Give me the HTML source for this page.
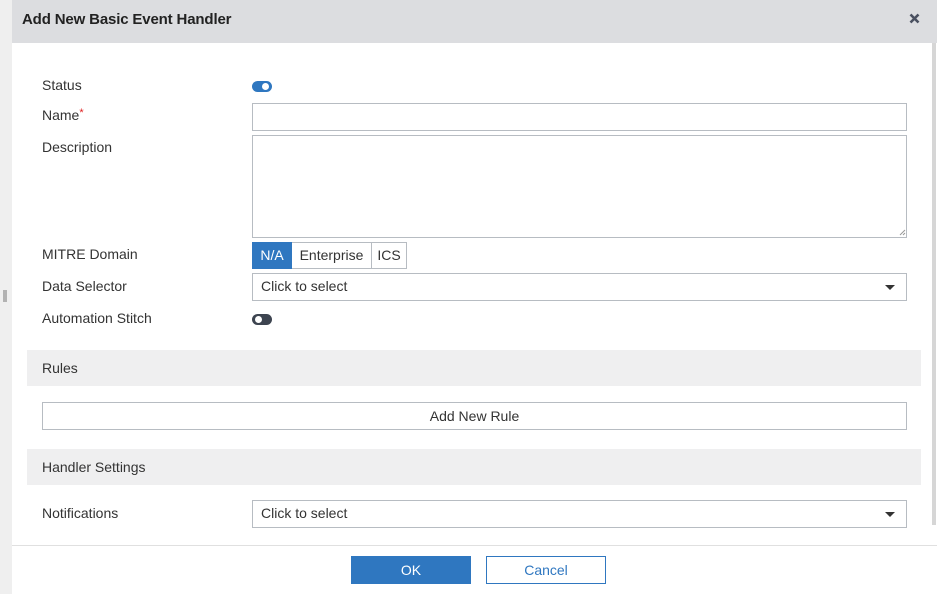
<!DOCTYPE html>
<html><head><meta charset="utf-8"><style>
*{box-sizing:border-box;margin:0;padding:0}
body{width:937px;height:594px;overflow:hidden;background:#fff;font-family:"Liberation Sans",sans-serif;font-size:14px;color:#333;position:relative}
.abs{position:absolute}
.lbl{position:absolute;left:42px;font-size:14px;color:#333}
.inp{position:absolute;left:252px;width:655px;border:1px solid #b7bcc2;background:#fff}
.sel{font-size:14px;color:#333;padding-left:8px;line-height:25px}
.arrow{position:absolute;right:11px;top:11px;width:0;height:0;border-left:5px solid transparent;border-right:5px solid transparent;border-top:5px solid #333}
.sec{position:absolute;left:27px;width:894px;height:36px;background:#efeff0;font-size:14px;color:#333;padding-left:15px;line-height:36px}
</style></head><body>
<div class="abs" style="left:0;top:0;width:12px;height:594px;background:#efefef"></div>
<div class="abs" style="left:3px;top:290px;width:4px;height:12px;background-image:radial-gradient(#888 0.8px,transparent 1px);background-size:2px 2px;opacity:.8"></div>
<div class="abs" style="left:12px;top:0;width:925px;height:43px;background:#dcdde0"></div>
<div class="abs" style="left:22px;top:11px;font-size:15px;font-weight:bold;color:#222;letter-spacing:-0.15px">Add New Basic Event Handler</div>
<svg class="abs" style="left:909px;top:13px" width="11" height="11" viewBox="0 0 11 11"><path d="M1.5 1.5L9.5 9.5M9.5 1.5L1.5 9.5" stroke="#4a5060" stroke-width="2.6"/></svg>
<div class="abs" style="left:932px;top:43px;width:4px;height:482px;background:#d6d6d6"></div>

<div class="lbl" style="top:77px">Status</div>
<div class="abs" style="left:252px;top:81px;width:20px;height:11px;border-radius:6px;background:#2f77c0"></div>
<div class="abs" style="left:262px;top:83px;width:7px;height:7px;border-radius:50%;background:#fff"></div>

<div class="lbl" style="top:107px">Name<span style="color:#e02020;font-size:11px;vertical-align:top">*</span></div>
<div class="inp" style="top:103px;height:28px"></div>

<div class="lbl" style="top:139px">Description</div>
<div class="inp" style="top:135px;height:103px"></div>
<svg class="abs" style="left:899px;top:229px" width="7" height="7"><path d="M6 1L1 6M6 4L4 6" stroke="#999" stroke-width="1"/></svg>

<div class="lbl" style="top:246px">MITRE Domain</div>
<div class="abs" style="left:252px;top:242px;height:27px;display:flex;font-size:14px;line-height:25px;text-align:center">
<div style="background:#2f77c0;color:#fff;width:40px;border:1px solid #2f77c0">N/A</div>
<div style="border:1px solid #b7bcc2;border-left:none;width:80px;color:#333">Enterprise</div>
<div style="border:1px solid #b7bcc2;border-left:none;width:35px;color:#333">ICS</div>
</div>

<div class="lbl" style="top:278px">Data Selector</div>
<div class="inp sel" style="top:273px;height:28px">Click to select<div class="arrow"></div></div>

<div class="lbl" style="top:310px">Automation Stitch</div>
<div class="abs" style="left:252px;top:314px;width:20px;height:11px;border-radius:6px;background:#3d4450"></div>
<div class="abs" style="left:255px;top:316px;width:7px;height:7px;border-radius:50%;background:#fff"></div>

<div class="sec" style="top:350px">Rules</div>
<div class="abs" style="left:42px;top:402px;width:865px;height:28px;border:1px solid #b7bcc2;text-align:center;line-height:26px;font-size:14px;color:#333">Add New Rule</div>

<div class="sec" style="top:449px">Handler Settings</div>

<div class="lbl" style="top:505px">Notifications</div>
<div class="inp sel" style="top:500px;height:28px">Click to select<div class="arrow"></div></div>

<div class="abs" style="left:12px;top:545px;width:925px;height:1px;background:#e0e0e0"></div>
<div class="abs" style="left:351px;top:556px;width:120px;height:28px;background:#2f77c0;color:#fff;text-align:center;line-height:28px;font-size:14px">OK</div>
<div class="abs" style="left:486px;top:556px;width:120px;height:28px;border:1px solid #2f77c0;color:#2f77c0;text-align:center;line-height:26px;font-size:14px">Cancel</div>
</body></html>
